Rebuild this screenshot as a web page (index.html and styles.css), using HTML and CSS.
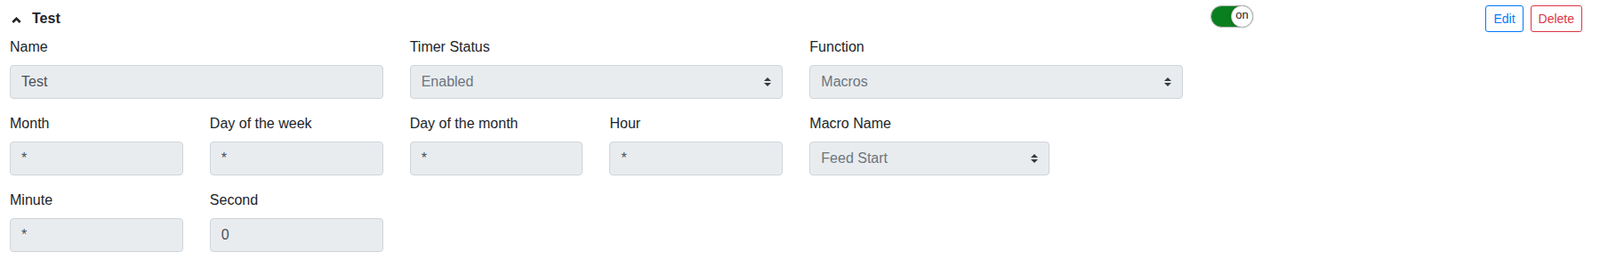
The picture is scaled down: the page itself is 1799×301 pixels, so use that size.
FILE: index.html
```html
<!DOCTYPE html>
<html>
<head>
<meta charset="utf-8">
<link rel="stylesheet" href="styles.css">
</head>
<body>
<div class="card">
  <div class="header">
    <div class="title">
      <svg class="caret" width="11" height="7" viewBox="0 0 11 7"><polyline points="1.3,6 5.5,1.9 9.7,6" fill="none" stroke="#212529" stroke-width="2.7"/></svg>
      <span>Test</span>
    </div>
    <div class="actions">
      <div class="toggle"><div class="knob">on</div></div>
      <div class="btns">
        <button class="btn btn-edit">Edit</button>
        <button class="btn btn-delete">Delete</button>
      </div>
    </div>
  </div>

  <div class="form">
    <div class="cell">
      <div class="group"><label>Name</label><input class="ctl" disabled value="Test"></div>
    </div>
    <div class="cell">
      <div class="group"><label>Timer Status</label><div class="ctl select"><span>Enabled</span><svg width="8" height="10" viewBox="0 0 4 5"><path fill="#343a40" d="M2 0L0 2h4zm0 5L0 3h4z"/></svg></div></div>
    </div>
    <div class="cell">
      <div class="group"><label>Function</label><div class="ctl select"><span>Macros</span><svg width="8" height="10" viewBox="0 0 4 5"><path fill="#343a40" d="M2 0L0 2h4zm0 5L0 3h4z"/></svg></div></div>
    </div>

    <div class="cell two">
      <div class="group"><label>Month</label><input class="ctl" disabled value="*"></div>
      <div class="group"><label>Day of the week</label><input class="ctl" disabled value="*"></div>
    </div>
    <div class="cell two">
      <div class="group"><label>Day of the month</label><input class="ctl" disabled value="*"></div>
      <div class="group"><label>Hour</label><input class="ctl" disabled value="*"></div>
    </div>
    <div class="cell three">
      <div class="group span2"><label>Macro Name</label><div class="ctl select"><span>Feed Start</span><svg width="8" height="10" viewBox="0 0 4 5"><path fill="#343a40" d="M2 0L0 2h4zm0 5L0 3h4z"/></svg></div></div>
    </div>

    <div class="cell two">
      <div class="group"><label>Minute</label><input class="ctl" disabled value="*"></div>
      <div class="group"><label>Second</label><input class="ctl" disabled value="0"></div>
    </div>
  </div>
</div>
</body>
</html>
```

FILE: styles.css
```css
* { box-sizing: border-box; }
html, body {
  margin: 0;
  padding: 0;
  background: #fff;
}
body {
  font-family: "Liberation Sans", Arial, Helvetica, sans-serif;
  font-size: 16px;
  line-height: 1.5;
  color: #212529;
}
.card {
  width: 1799px;
}
.header {
  display: grid;
  grid-template-columns: 1360px 1fr;
  padding: 6px 20px 0 0;
  margin-bottom: 5px;
  align-items: start;
}
.title {
  display: flex;
  align-items: center;
  height: 30px;
  padding-left: 13px;
  font-weight: bold;
  font-size: 16px;
}
.caret {
  display: block;
  margin-right: 12px;
  margin-top: 2px;
}
.actions {
  display: flex;
  justify-content: space-between;
  align-items: flex-start;
}
.toggle {
  width: 48px;
  height: 25px;
  border-radius: 13px;
  background: #0a7f1f;
  border: 1px solid #b8b8b8;
  display: flex;
  justify-content: flex-end;
  margin-left: 1px;
}
.knob {
  width: 25px;
  height: 25px;
  margin: -1px -1px 0 0;
  border-radius: 50%;
  background: #fff;
  border: 1px solid #bdbdbd;
  box-shadow: 0 0 2px rgba(0,0,0,0.35);
  font-size: 13px;
  line-height: 20px;
  text-align: center;
  color: #212529;
}
.btns {
  display: flex;
  gap: 8px;
}
.btn {
  font-family: inherit;
  font-size: 14px;
  line-height: 20px;
  padding: 4px 8px;
  border-radius: 3px;
  background: #fff;
  border: 1px solid;
  cursor: pointer;
}
.btn-edit { color: #007bff; border-color: #007bff; }
.btn-delete { color: #dc3545; border-color: #dc3545; }

.form {
  display: grid;
  grid-template-columns: repeat(3, 419.67px);
  column-gap: 30px;
  padding-left: 11px;
}
.cell {
  display: grid;
  grid-template-columns: 1fr;
  column-gap: 30px;
}
.cell.two { grid-template-columns: 1fr 1fr; }
.cell.three { grid-template-columns: 1fr 1fr 1fr; }
.span2 { grid-column: span 2; }
.group {
  margin-bottom: 16px;
  min-width: 0;
}
label {
  display: block;
  margin-bottom: 8px;
  line-height: 24px;
}
.ctl {
  display: block;
  width: 100%;
  height: 38px;
  padding: 6px 12px;
  font-family: inherit;
  font-size: 16px;
  line-height: 24px;
  color: #495057;
  background: #e9ecef;
  border: 1px solid #ced4da;
  border-radius: 4px;
  margin: 0;
}
.select {
  display: flex;
  align-items: center;
  justify-content: space-between;
  color: #6c757d;
}
.select svg { display: block; }
```
